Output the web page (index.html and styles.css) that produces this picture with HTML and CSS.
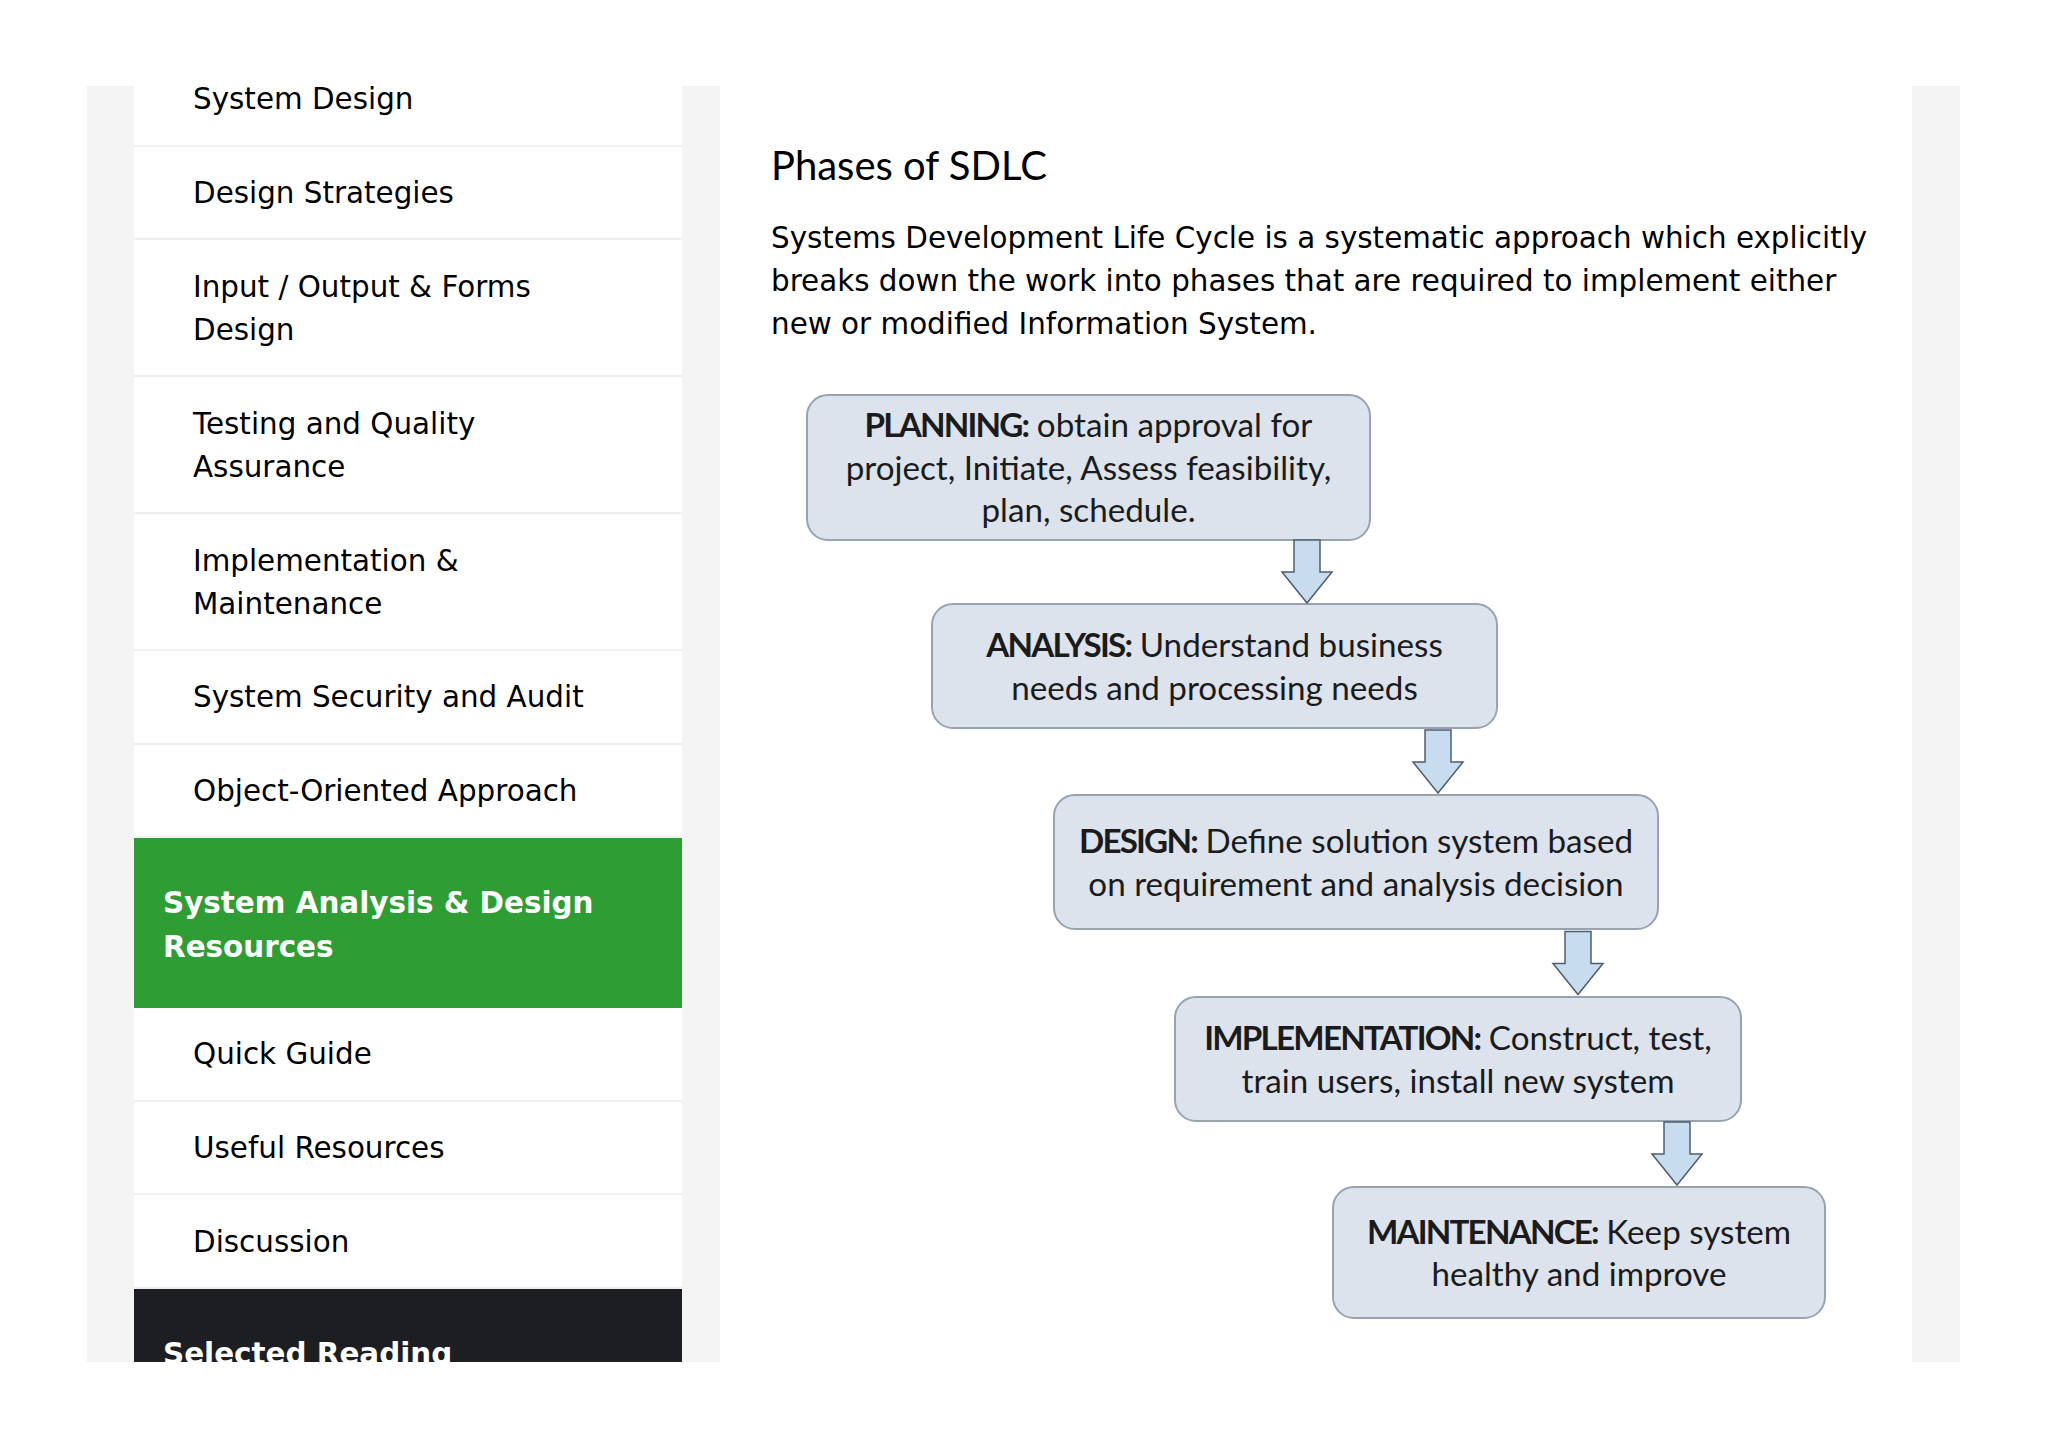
FILE: index.html
```html
<!DOCTYPE html>
<html lang="en">
<head>
    <meta charset="UTF-8">
    <meta name="viewport" content="width=device-width, initial-scale=1.0">
    <title>Phases of SDLC</title>
    <link rel="stylesheet" href="styles.css">
</head>
<body>
    <div class="frame">
        <aside class="sidebar">
            <ul class="nav">
                <li><a href="#">System Design</a></li>
                <li><a href="#">Design Strategies</a></li>
                <li><a href="#">Input / Output &amp; Forms Design</a></li>
                <li><a href="#">Testing and Quality Assurance</a></li>
                <li><a href="#">Implementation &amp; Maintenance</a></li>
                <li><a href="#">System Security and Audit</a></li>
                <li><a href="#">Object-Oriented Approach</a></li>
            </ul>
            <div class="nav-head green">System Analysis &amp; Design Resources</div>
            <ul class="nav">
                <li><a href="#">Quick Guide</a></li>
                <li><a href="#">Useful Resources</a></li>
                <li><a href="#">Discussion</a></li>
            </ul>
            <div class="nav-head dark">Selected Reading</div>
        </aside>
        <main class="content">
            <h2>Phases of SDLC</h2>
            <p>Systems Development Life Cycle is a systematic approach which explicitly breaks down the work into phases that are required to implement either new or modified Information System.</p>
            <div class="sdlc">
                <div class="phase p1"><span><b>PLANNING:</b> obtain approval for<br>project, Initiate, Assess feasibility,<br>plan, schedule.</span></div>
                <div class="phase p2"><span><b>ANALYSIS:</b> Understand business<br>needs and processing needs</span></div>
                <div class="phase p3"><span><b>DESIGN:</b> Define solution system based<br>on requirement and analysis decision</span></div>
                <div class="phase p4"><span><b>IMPLEMENTATION:</b> Construct, test,<br>train users, install new system</span></div>
                <div class="phase p5"><span><b>MAINTENANCE:</b> Keep system<br>healthy and improve</span></div>

                <svg class="arrow a1" viewBox="0 0 52 64"><path d="M13 0H39V32H51L26 63L1 32H13Z"/></svg>
                <svg class="arrow a2" viewBox="0 0 52 64"><path d="M13 0H39V32H51L26 63L1 32H13Z"/></svg>
                <svg class="arrow a3" viewBox="0 0 52 64"><path d="M13 0H39V32H51L26 63L1 32H13Z"/></svg>
                <svg class="arrow a4" viewBox="0 0 52 64"><path d="M13 0H39V32H51L26 63L1 32H13Z"/></svg>
            </div>
        </main>
    </div>
</body>
</html>
```

FILE: styles.css
```css
body {
    margin: 0;
    background: #fff;
    font-family: "DejaVu Sans", Verdana, sans-serif;
    color: #111;
}
.frame {
    display: flex;
    gap: 38px;
    width: 1873px;
    height: 1276px;
    margin: 86px 0 0 87px;
    padding: 0 48px 0 47px;
    box-sizing: border-box;
    background: #f4f4f4;
    overflow: hidden;
}
.sidebar {
    width: 548px;
    flex-shrink: 0;
    margin-top: -33px;
}
.nav {
    list-style: none;
    margin: 0;
    padding: 0;
}
.nav li {
    background: #fff;
    border-bottom: 2px solid #efefef;
}
.nav a {
    display: block;
    padding: 25.4px 66px 23.1px 59px;
    font-size: 29.4px;
    line-height: 43.2px;
    color: #000;
    text-decoration: none;
}
.nav-head {
    padding: 44px 60px 39px 29px;
    font-size: 29.4px;
    line-height: 43.2px;
    font-weight: bold;
    color: #fff;
}
.green {
    background: #2e9e34;
}
.dark {
    background: #1c1e21;
    padding-top: 43.7px;
}
.content {
    flex: 1;
    background: #fff;
    padding: 54.6px 30px 0 51px;
}
.content h2 {
    margin: 0;
    font-family: Lato, sans-serif;
    font-weight: normal;
    font-size: 40px;
    line-height: 48px;
    color: #000;
}
.content p {
    margin: 28px 0 0;
    font-size: 29.4px;
    line-height: 43.2px;
    color: #000;
}

/* diagram */
.sdlc {
    position: relative;
    margin-top: 33.4px;
    height: 960px;
    font-family: Lato, "Liberation Sans", sans-serif;
    font-size: 33.2px;
    line-height: 42.5px;
    color: #1b1b1b;
}
.phase {
    position: absolute;
    display: flex;
    align-items: center;
    justify-content: center;
    text-align: center;
    box-sizing: border-box;
    background: #dce3ed;
    border: 2px solid #98a3b1;
    border-radius: 22px;
}
.phase b {
    font-weight: 700;
    letter-spacing: -1.8px;
}
.p1 { left: 35px;  top: 14px;  width: 565px; height: 147px; }
.p2 { left: 160px; top: 223px; width: 567px; height: 126px; }
.p3 { left: 282px; top: 414px; width: 606px; height: 136px; }
.p4 { left: 403px; top: 616px; width: 568px; height: 126px; }
.p5 { left: 561px; top: 806px; width: 494px; height: 133px; }
.arrow {
    position: absolute;
    width: 52px;
    height: 64px;
    overflow: visible;
}
.arrow path {
    fill: #c8dcf0;
    stroke: #4f5d6e;
    stroke-width: 1.5;
}
.a1 { left: 510px; top: 160px; }
.a2 { left: 641px; top: 349px; height: 66px; }
.a3 { left: 781px; top: 550px; height: 67px; }
.a4 { left: 880px; top: 742px; }
```
